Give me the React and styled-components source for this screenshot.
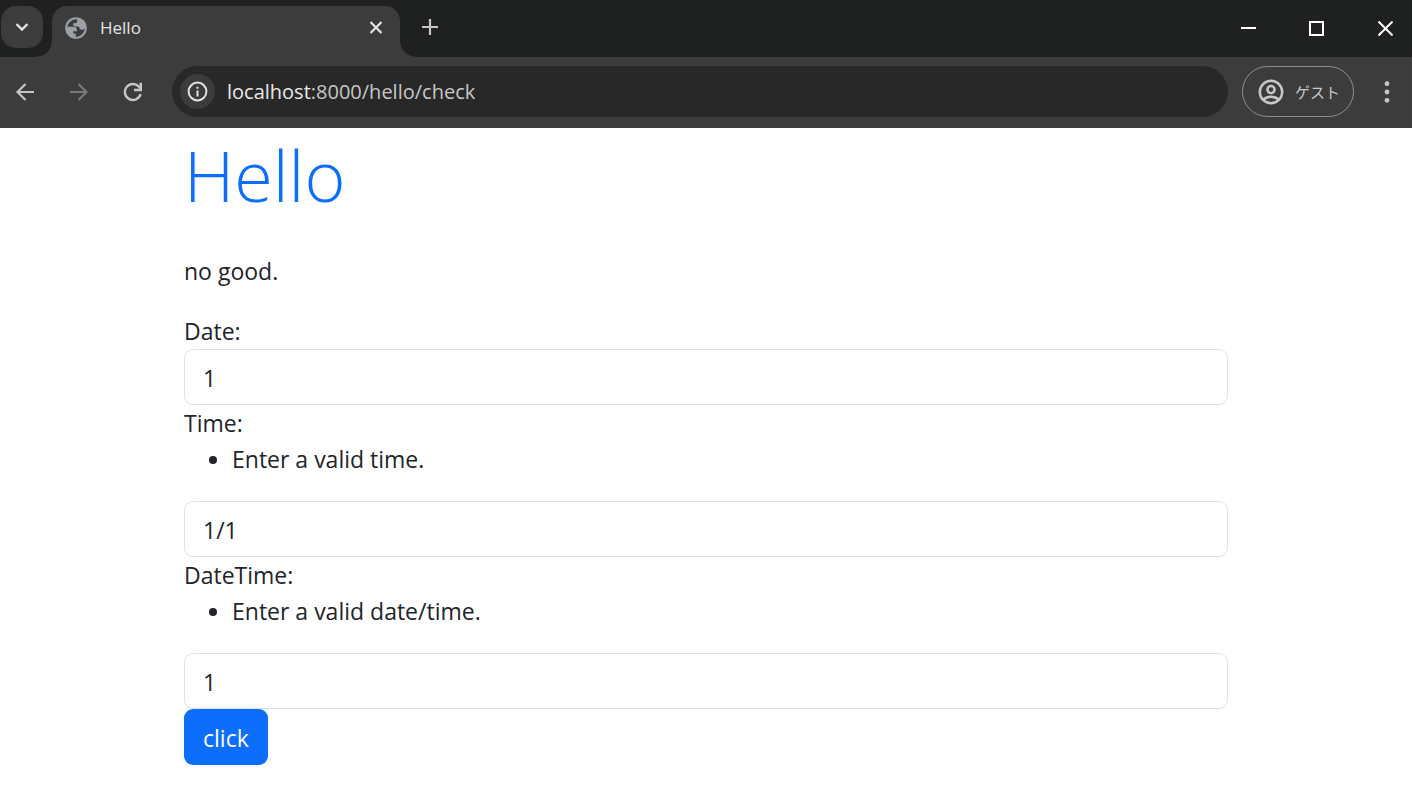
import React, { useState } from "react";
import styled, { createGlobalStyle } from "styled-components";

const GlobalStyle = createGlobalStyle`
  *, *::before, *::after {
    box-sizing: border-box;
  }

  body {
    margin: 0;
    background-color: #ffffff;
    color: #212529;
    font-family: "Open Sans", "Noto Sans", sans-serif;
    font-size: 23px;
    line-height: 36px;
  }
`;

const TabStrip = styled.div`
  display: flex;
  height: 57px;
  background-color: #1f2120;
`;

const IconButton = styled.button`
  display: flex;
  align-items: center;
  justify-content: center;
  flex-shrink: 0;
  width: ${props => props.$width || 54}px;
  height: ${props => props.$height || 54}px;
  padding: 0;
  border: none;
  background: none;
  color: ${props => props.$color || '#c7c7c7'};
  cursor: pointer;
`;

const TabSearchButton = styled(IconButton)`
  margin: 6px 9px 0 1px;
  border-radius: 15px;
  background-color: #3c3c3c;
`;

const Tab = styled.div`
  position: relative;
  display: flex;
  align-items: center;
  width: 348px;
  margin-top: 6px;
  padding: 0 10px 8px 13px;
  border-radius: 15px 15px 0 0;
  background-color: #3c3c3c;

  &::before,
  &::after {
    content: "";
    position: absolute;
    bottom: 0;
    width: 15px;
    height: 15px;
  }

  &::before {
    right: 100%;
    background: radial-gradient(circle at 0 0, transparent 14px, #3c3c3c 15px);
  }

  &::after {
    left: 100%;
    background: radial-gradient(circle at 100% 0, transparent 14px, #3c3c3c 15px);
  }
`;

const TabTitle = styled.span`
  flex: 1;
  margin-left: 13px;
  color: #e3e3e3;
  font-size: 17px;
  line-height: 24px;
`;

const NewTabButton = styled(IconButton)`
  margin-left: 9px;
`;

const WindowControls = styled.div`
  display: flex;
  margin-left: auto;
  margin-right: -7px;
`;

const Toolbar = styled.div`
  display: flex;
  align-items: center;
  height: 71px;
  padding-bottom: 2px;
  background-color: #3c3c3c;
`;

const NavButtons = styled.nav`
  display: flex;
  width: 172px;
  margin-left: -2px;
  margin-right: 2px;
`;

const AddressBar = styled.div`
  display: flex;
  align-items: center;
  flex: 1;
  height: 51px;
  padding: 0 8px;
  border-radius: 26px;
  background-color: #282828;
`;

const SiteInfoButton = styled(IconButton)`
  border-radius: 50%;
  background-color: #3c3c3c;
`;

const Address = styled.a`
  margin-left: 12px;
  color: #c7c7c7;
  font-size: 20px;
  line-height: 28px;
  text-decoration: none;
`;

const Host = styled.span`
  color: #e8e8e8;
`;

const GuestButton = styled.button`
  display: flex;
  align-items: center;
  gap: 11px;
  width: 112px;
  height: 51px;
  margin-left: 14px;
  padding: 0 0 0 15px;
  border: 1px solid #8f8f8f;
  border-radius: 26px;
  background: none;
  color: #c7c7c7;
  font-family: "Open Sans", "Noto Sans CJK JP", sans-serif;
  font-size: 15px;
  white-space: nowrap;
  cursor: pointer;
`;

const MenuButton = styled(IconButton)`
  margin: 0 4px 0 12px;
`;

const Container = styled.main`
  max-width: 1080px;
  margin: 0 auto;
  padding: 0 18px;
`;

const Title = styled.h1`
  margin: 0 0 31px;
  color: #0d6efd;
  font-size: 70px;
  font-weight: 300;
  line-height: 94px;
`;

const Message = styled.p`
  margin: 0 0 24px;
`;

const Label = styled.label`
  display: block;
`;

const ErrorList = styled.ul`
  margin: 0 0 24px;
  padding-left: 48px;
`;

const Input = styled.input`
  display: block;
  width: 100%;
  height: 56px;
  padding: 10px 18px 8px;
  border: 1px solid #dee2e6;
  border-radius: 9px;
  background-color: #ffffff;
  color: #212529;
  font: inherit;
`;

const SubmitButton = styled.button`
  display: block;
  height: 56px;
  padding: 11px 19px 9px;
  border: none;
  border-radius: 9px;
  background-color: #0d6efd;
  color: #ffffff;
  font: inherit;
  cursor: pointer;
`;

const Icon = ({ size, width = 2, children }) => (
  <svg
    width={size}
    height={size}
    viewBox={`0 0 ${size} ${size}`}
    fill="none"
    stroke="currentColor"
    strokeWidth={width}
    aria-hidden="true"
  >
    {children}
  </svg>
);

const GlobeIcon = () => (
  <svg width="22" height="22" viewBox="0 0 22 22" aria-hidden="true">
    <circle cx="11" cy="11" r="10.8" fill="#9aa0a6" />
    <path
      d="M12.2 2.3C7.5 1.8 3.2 5.2 2.4 9.8h6.2c1.9 0 3.3 1.2 3.3 2.9v1.5H8.2v2.4h2.5v3.1c5 .2 9-3.7 9-8.6-.8 1.5-2.1 2-3.5 1.6-1.7-.4-1.6-2.5-2.9-3.1-1.1-.5-3.6.1-4.6-.7-1-.9-.6-2.6.8-2.8h1.7c1-.2.6-1.5 1-2.2z"
      fill="#3c3c3c"
    />
  </svg>
);

const FIELDS = [
  { name: "date", label: "Date:", errors: [] },
  { name: "time", label: "Time:", errors: ["Enter a valid time."] },
  { name: "datetime", label: "DateTime:", errors: ["Enter a valid date/time."] },
];

const BrowserChrome = () => (
  <header>
    <TabStrip>
      <TabSearchButton $width={42} $height={42} $color="#e3e3e3" aria-label="Search tabs">
        <Icon size={14} width={2.4}><path d="M1.5 4l5.5 5.5L12.5 4" /></Icon>
      </TabSearchButton>
      <Tab>
        <GlobeIcon />
        <TabTitle>Hello</TabTitle>
        <IconButton $width={28} $height={28} $color="#e3e3e3" aria-label="Close tab">
          <Icon size={14} width={2.2}><path d="M1.5 1l11 11M12.5 1l-11 11" /></Icon>
        </IconButton>
      </Tab>
      <NewTabButton $width={42} aria-label="New tab">
        <Icon size={16} width={2.2}><path d="M8 0v16M0 8h16" /></Icon>
      </NewTabButton>
      <WindowControls>
        <IconButton $width={68} $height={56} $color="#ffffff" aria-label="Minimize">
          <Icon size={15}><path d="M0 7h15" /></Icon>
        </IconButton>
        <IconButton $width={69} $height={56} $color="#ffffff" aria-label="Maximize">
          <Icon size={15}><path d="M1 1h13v13H1z" /></Icon>
        </IconButton>
        <IconButton $width={68} $height={56} $color="#ffffff" aria-label="Close">
          <Icon size={15}><path d="M.5.5l14 14M14.5.5l-14 14" /></Icon>
        </IconButton>
      </WindowControls>
    </TabStrip>
    <Toolbar>
      <NavButtons>
        <IconButton aria-label="Back">
          <Icon size={18} width={2.2}><path d="M18 9H1.5M9.5 1L1.5 9l8 8" /></Icon>
        </IconButton>
        <IconButton $color="#7a7a7a" aria-label="Forward">
          <Icon size={18} width={2.2}><path d="M0 9h16.5M8.5 1l8 8-8 8" /></Icon>
        </IconButton>
        <IconButton aria-label="Reload">
          <Icon size={20} width={2.4}>
            <path d="M17.6 12.2A8 8 0 1 1 15.8 4.5l1.8 2" />
            <path d="M17.8.8v7.2h-6.8" />
          </Icon>
        </IconButton>
      </NavButtons>
      <AddressBar>
        <SiteInfoButton $width={35} $height={35} $color="#e3e3e3" aria-label="View site information">
          <Icon size={21}>
            <circle cx="10.5" cy="10.5" r="8.9" />
            <path d="M10.5 9.5v6M10.5 5.7v2.1" />
          </Icon>
        </SiteInfoButton>
        <Address href="#"><Host>localhost</Host>:8000/hello/check</Address>
      </AddressBar>
      <GuestButton>
        <Icon size={26} width={2.5}>
          <circle cx="13" cy="13" r="11.2" />
          <circle cx="13" cy="10.6" r="3.6" />
          <path d="M5.3 20.5c4.2-3.8 11.2-3.8 15.4 0" />
        </Icon>
        ゲスト
      </GuestButton>
      <MenuButton $width={42} aria-label="Menu">
        <svg width="6" height="22" viewBox="0 0 6 22" fill="currentColor" aria-hidden="true">
          <circle cx="3" cy="2.7" r="2.4" />
          <circle cx="3" cy="11" r="2.4" />
          <circle cx="3" cy="19.3" r="2.4" />
        </svg>
      </MenuButton>
    </Toolbar>
  </header>
);

const App = () => {
  const [values, setValues] = useState({ date: "1", time: "1/1", datetime: "1" });

  const handleChange = (e) => {
    setValues({ ...values, [e.target.name]: e.target.value });
  };

  return (
    <>
      <GlobalStyle />
      <BrowserChrome />
      <Container>
        <Title>Hello</Title>
        <Message>no good.</Message>
        <form onSubmit={(e) => e.preventDefault()}>
          {FIELDS.map((field) => (
            <div key={field.name}>
              <Label htmlFor={field.name}>{field.label}</Label>
              {field.errors.length > 0 && (
                <ErrorList>
                  {field.errors.map((error) => <li key={error}>{error}</li>)}
                </ErrorList>
              )}
              <Input
                type="text"
                id={field.name}
                name={field.name}
                value={values[field.name]}
                onChange={handleChange}
              />
            </div>
          ))}
          <SubmitButton type="submit">click</SubmitButton>
        </form>
      </Container>
    </>
  );
};

export default App;
